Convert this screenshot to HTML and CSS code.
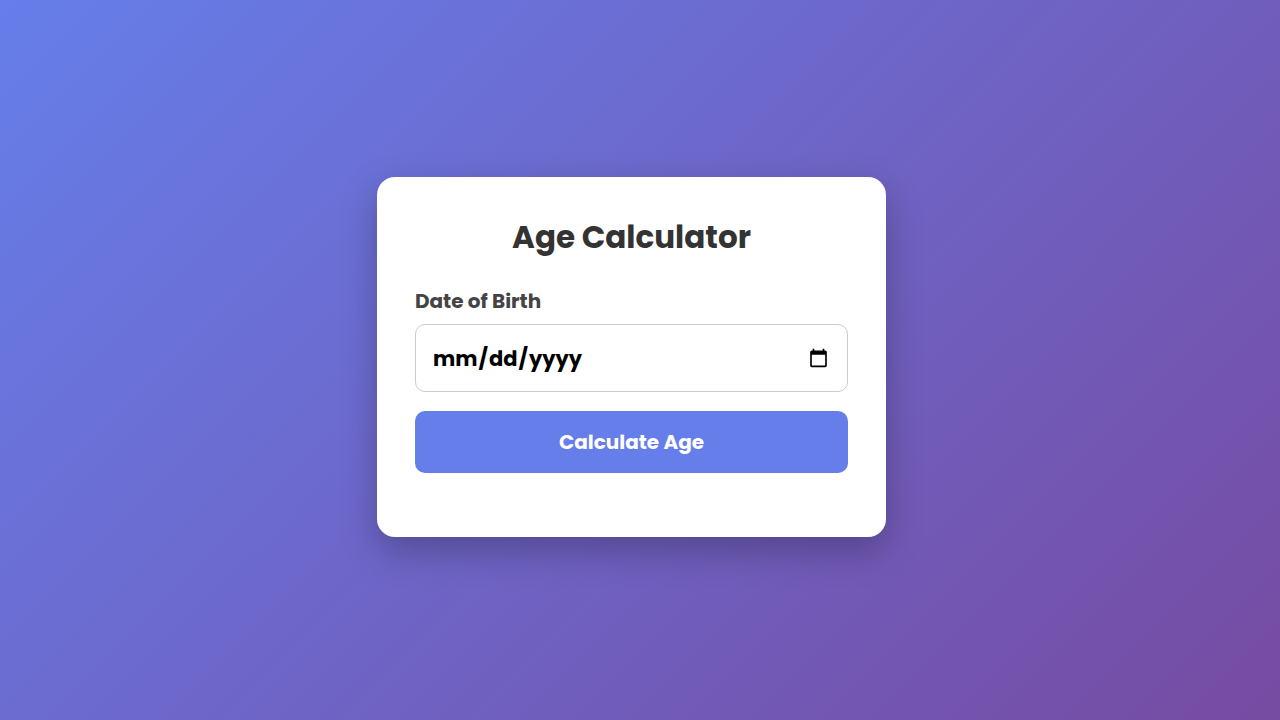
FILE: index.html
```html
<!DOCTYPE html>
<html lang="en">
<head>
    <meta charset="UTF-8">
    <meta name="viewport" content="width=device-width, initial-scale=1.0">
    <title>Age Calculator</title>
    <link rel="stylesheet" href="styles.css">
</head>
<body>
    <div class="container">
        <h1>Age Calculator</h1>
        <label for="dob">Date of Birth</label>
        <input type="date" id="dob">
        <button type="button" onclick="calculateAge()">Calculate Age</button>
        <div class="result" id="result"></div>
    </div>

    <script>
        function calculateAge() {
            const dob = document.getElementById('dob').value;
            const result = document.getElementById('result');

            if (!dob) {
                result.textContent = 'Please select your date of birth.';
                return;
            }

            const birth = new Date(dob + 'T00:00');
            const today = new Date();
            let years = today.getFullYear() - birth.getFullYear();

            // Birthday has not come round yet this year
            if (today.getMonth() < birth.getMonth() ||
                (today.getMonth() === birth.getMonth() && today.getDate() < birth.getDate())) {
                years--;
            }

            result.textContent = years < 0 ? 'Date of birth is in the future.' : `You are ${years} years old.`;
        }
    </script>
</body>
</html>
```
FILE: styles.css
```css
* {
    box-sizing: border-box;
    margin: 0;
    padding: 0;
    font-family: "Poppins", "Open Sans", sans-serif;
}
body {
    display: flex;
    justify-content: center;
    align-items: center;
    min-height: 100vh;
    padding: 0 17px 6px 0;
    background: linear-gradient(135deg, #667eea, #764ba2);
}
.container {
    width: 100%;
    max-width: 509px;
    padding: 38px;
    background: #fff;
    border-radius: 18px;
    box-shadow: 0 14px 36px rgba(0, 0, 0, 0.26);
}
h1 {
    margin-bottom: 27px;
    font-size: 31px;
    line-height: 44px;
    font-weight: 700;
    text-align: center;
    color: #333;
}
label {
    display: block;
    margin-bottom: 8px;
    font-size: 20px;
    line-height: 30px;
    font-weight: 700;
    color: #444;
}
input {
    display: block;
    width: 100%;
    height: 68px;
    padding: 16px;
    border: 1px solid #ccc;
    border-radius: 10px;
    font-size: 21px;
    font-weight: 700;
    color: #000;
    background: #fff;
}
button {
    width: 100%;
    height: 62px;
    margin-top: 19px;
    border: none;
    border-radius: 10px;
    background: #667eea;
    color: #fff;
    font-size: 20px;
    font-weight: 700;
    cursor: pointer;
}
button:hover {
    background: #5a67d8;
}
.result {
    min-height: 26px;
    font-size: 18px;
    line-height: 26px;
    text-align: center;
    color: #333;
}
```
